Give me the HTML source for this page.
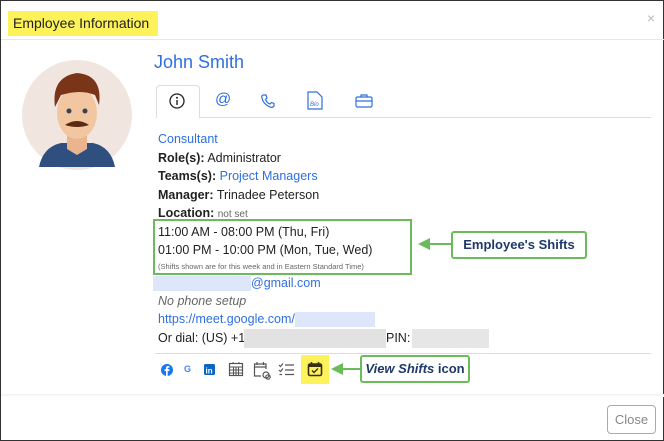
<!DOCTYPE html>
<html><head><style>
*{box-sizing:border-box;margin:0;padding:0}
body{width:664px;height:441px;background:#fff;font-family:"Liberation Sans",sans-serif;position:relative;overflow:hidden;border:1px solid #333;}
.a{position:absolute}
.t{font-size:12.5px;color:#222;position:absolute;left:157px;white-space:nowrap}
.b{color:#2f6fe0}
</style></head><body>
<div class="a" style="left:7px;top:10px;width:150px;height:25px;background:#fdf25a"></div>
<div class="a" style="left:12px;top:14px;font-size:14px;color:#222">Employee Information</div>
<div class="a" style="left:646px;top:9px;font-size:14px;color:#bbb">×</div>
<div class="a" style="left:0;top:38px;width:664px;height:1px;background:#e8e8e8"></div>
<svg class="a" style="left:20px;top:58px" width="112" height="112" viewBox="0 0 112 112">
<circle cx="56" cy="56" r="55" fill="#f1e6df"/>
<path d="M18 108 Q22 88 40 84 L72 84 Q90 88 94 108 Z" fill="#2f4f7f"/>
<path d="M46 76 L66 76 L66 90 L56 96 L46 90Z" fill="#e9b48e"/>
<ellipse cx="56" cy="54" rx="20" ry="26" fill="#f2c6a0"/>
<path d="M34 48 Q30 18 56 14 Q82 16 78 46 L74 36 Q60 30 40 36Z" fill="#7a3518"/>
<path d="M44 66 Q56 58 68 66 Q56 70 44 66Z" fill="#5a2a14"/>
<circle cx="48" cy="52" r="2.5" fill="#345"/><circle cx="64" cy="52" r="2.5" fill="#345"/>
</svg>
<div class="a b" style="left:153px;top:51px;font-size:18px">John Smith</div>
<div class="a" style="left:155px;top:84px;width:44px;height:33px;border:1px solid #ddd;border-bottom:none;background:#fff;border-radius:4px 4px 0 0"></div>
<div class="a" style="left:199px;top:116px;width:451px;height:1px;background:#ddd"></div>
<svg class="a" style="left:168px;top:92px" width="16" height="16"><circle cx="8" cy="8" r="7" fill="none" stroke="#222" stroke-width="1.3"/><rect x="7.3" y="7" width="1.4" height="5" fill="#222"/><circle cx="8" cy="4.8" r="1" fill="#222"/></svg>
<div class="a b" style="left:214px;top:90px;font-size:16px">@</div>
<svg class="a" style="left:259px;top:92px" width="16" height="16"><path d="M3 2 L6 2 L7 5 L5.5 6.5 Q7 10 10 11 L11.5 9.5 L14 10.5 L14 13 Q13 15 10 14 Q3 11 2 5 Q1 3 3 2Z" fill="none" stroke="#2f6fe0" stroke-width="1.2"/></svg>
<svg class="a" style="left:306px;top:90px" width="16" height="19"><path d="M1 1 L10 1 L15 6 L15 18 L1 18Z" fill="none" stroke="#2f6fe0" stroke-width="1.2"/><text x="3" y="15" font-size="6" fill="#2f6fe0" font-style="italic">Bio</text></svg>
<svg class="a" style="left:354px;top:93px" width="18" height="14"><rect x="1" y="3" width="16" height="10" rx="1.5" fill="none" stroke="#2f6fe0" stroke-width="1.2"/><path d="M6 3 V1 H12 V3 M1 7 H17" fill="none" stroke="#2f6fe0" stroke-width="1.2"/></svg>
<div class="t b" style="top:131px">Consultant</div>
<div class="t" style="top:150px"><b style="font-weight:600">Role(s):</b> Administrator</div>
<div class="t" style="top:168px"><b style="font-weight:600">Teams(s):</b> <span class="b">Project Managers</span></div>
<div class="t" style="top:187px"><b style="font-weight:600">Manager:</b> Trinadee Peterson</div>
<div class="t" style="top:205px"><b style="font-weight:600">Location:</b> <span style="font-size:10px;color:#666">not set</span></div>
<div class="a" style="left:152px;top:218px;width:259px;height:56px;border:2px solid #6cbb5a"></div>
<div class="t" style="top:224px">11:00 AM - 08:00 PM (Thu, Fri)</div>
<div class="t" style="top:242px">01:00 PM - 10:00 PM (Mon, Tue, Wed)</div>
<div class="t" style="top:261px;font-size:7.5px;color:#666">(Shifts shown are for this week and in Eastern Standard Time)</div>
<div class="a" style="left:428px;top:242px;width:24px;height:2px;background:#6cbb5a"></div>
<div class="a" style="left:417px;top:237px;width:0;height:0;border-top:6px solid transparent;border-bottom:6px solid transparent;border-right:12px solid #6cbb5a"></div>
<div class="a" style="left:450px;top:230px;width:136px;height:28px;border:2px solid #6cbb5a;border-radius:3px;background:#fff;font-size:13px;font-weight:bold;color:#1f3a6a;text-align:center;line-height:24px">Employee's Shifts</div>
<div class="a" style="left:152px;top:275px;width:98px;height:15px;background:#dde6fb"></div>
<div class="t b" style="left:250px;top:275px">@gmail.com</div>
<div class="t" style="top:293px;font-style:italic;color:#666">No phone setup</div>
<div class="t b" style="top:311px">https://meet.google.com/</div>
<div class="a" style="left:294px;top:311px;width:80px;height:15px;background:#dde6fb"></div>
<div class="t" style="top:330px">Or dial: (US) +1</div>
<div class="a" style="left:243px;top:328px;width:142px;height:19px;background:#e2e2e2"></div>
<div class="t" style="left:385px;top:330px">PIN:</div>
<div class="a" style="left:411px;top:328px;width:77px;height:19px;background:#e6e6e6"></div>
<div class="a" style="left:154px;top:352px;width:496px;height:1px;background:#ddd"></div>
<svg class="a" style="left:160px;top:363px" width="12" height="12"><circle cx="6" cy="6" r="6" fill="#1877f2"/><path d="M6.7 12 V7 H8.3 L8.5 5.3 H6.7 V4.3 Q6.7 3.6 7.4 3.6 H8.5 V2.2 Q7.8 2 7 2 Q5 2 5 4 V5.3 H3.6 V7 H5 V12Z" fill="#fff"/></svg>
<div class="a" style="left:183px;top:363px;font-size:9px;font-weight:bold;color:#4285f4">G</div>
<svg class="a" style="left:203px;top:363px" width="11" height="11"><rect width="11" height="11" rx="1.5" fill="#0a66c2"/><text x="1.5" y="9.5" font-size="8" font-weight="bold" fill="#fff">in</text></svg>
<svg class="a" style="left:227px;top:360px" width="16" height="16"><rect x="1.5" y="2.5" width="13" height="12" fill="none" stroke="#555" stroke-width="1.2"/><path d="M1.5 6 H14.5 M1.5 9 H14.5 M1.5 12 H14.5 M5.5 6 V14.5 M8 6 V14.5 M10.5 6 V14.5 M5 1 V3 M11 1 V3" stroke="#555" stroke-width="1"/></svg>
<svg class="a" style="left:252px;top:360px" width="19" height="19"><path d="M13 8 V3 H1.5 V15 H8 M1.5 6 H13 M4 1 V4 M10.5 1 V4" fill="none" stroke="#555" stroke-width="1.2"/><circle cx="13" cy="14" r="3" fill="none" stroke="#555" stroke-width="1.2"/><circle cx="15" cy="16" r="2.2" fill="none" stroke="#555" stroke-width="1.2"/></svg>
<svg class="a" style="left:277px;top:361px" width="17" height="14"><path d="M1 3 L2.5 4.5 L5 1.5 M1 8 L2.5 9.5 L5 6.5 M7 3 H16 M7 8 H16 M7 12.5 H16 M1.5 12.5 H4" fill="none" stroke="#555" stroke-width="1.2"/></svg>
<div class="a" style="left:300px;top:354px;width:28px;height:29px;background:#fdf25a"></div>
<svg class="a" style="left:306px;top:360px" width="16" height="16"><rect x="1.5" y="3" width="13" height="11.5" rx="1.5" fill="none" stroke="#3a2e10" stroke-width="1.6"/><rect x="1.5" y="3" width="13" height="3" fill="#3a2e10"/><path d="M4.5 1 V4 M11.5 1 V4" stroke="#3a2e10" stroke-width="1.5"/><path d="M5 9.5 L7 11.5 L11 7.5" fill="none" stroke="#3a2e10" stroke-width="1.4"/></svg>
<div class="a" style="left:342px;top:367px;width:20px;height:2px;background:#6cbb5a"></div>
<div class="a" style="left:330px;top:362px;width:0;height:0;border-top:6px solid transparent;border-bottom:6px solid transparent;border-right:12px solid #6cbb5a"></div>
<div class="a" style="left:359px;top:354px;width:110px;height:28px;border:2px solid #6cbb5a;border-radius:3px;background:#fff;font-size:13px;font-weight:bold;color:#1f3a6a;text-align:center;line-height:24px"><i>View Shifts</i> icon</div>
<div class="a" style="left:0;top:393px;width:664px;height:3px;background:linear-gradient(#f0f0f0,#fff)"></div>
<div class="a" style="left:606px;top:404px;width:49px;height:29px;border:1px solid #aaa;border-radius:4px;font-size:13px;color:#888;text-align:center;line-height:27px">Close</div>
</body></html>
